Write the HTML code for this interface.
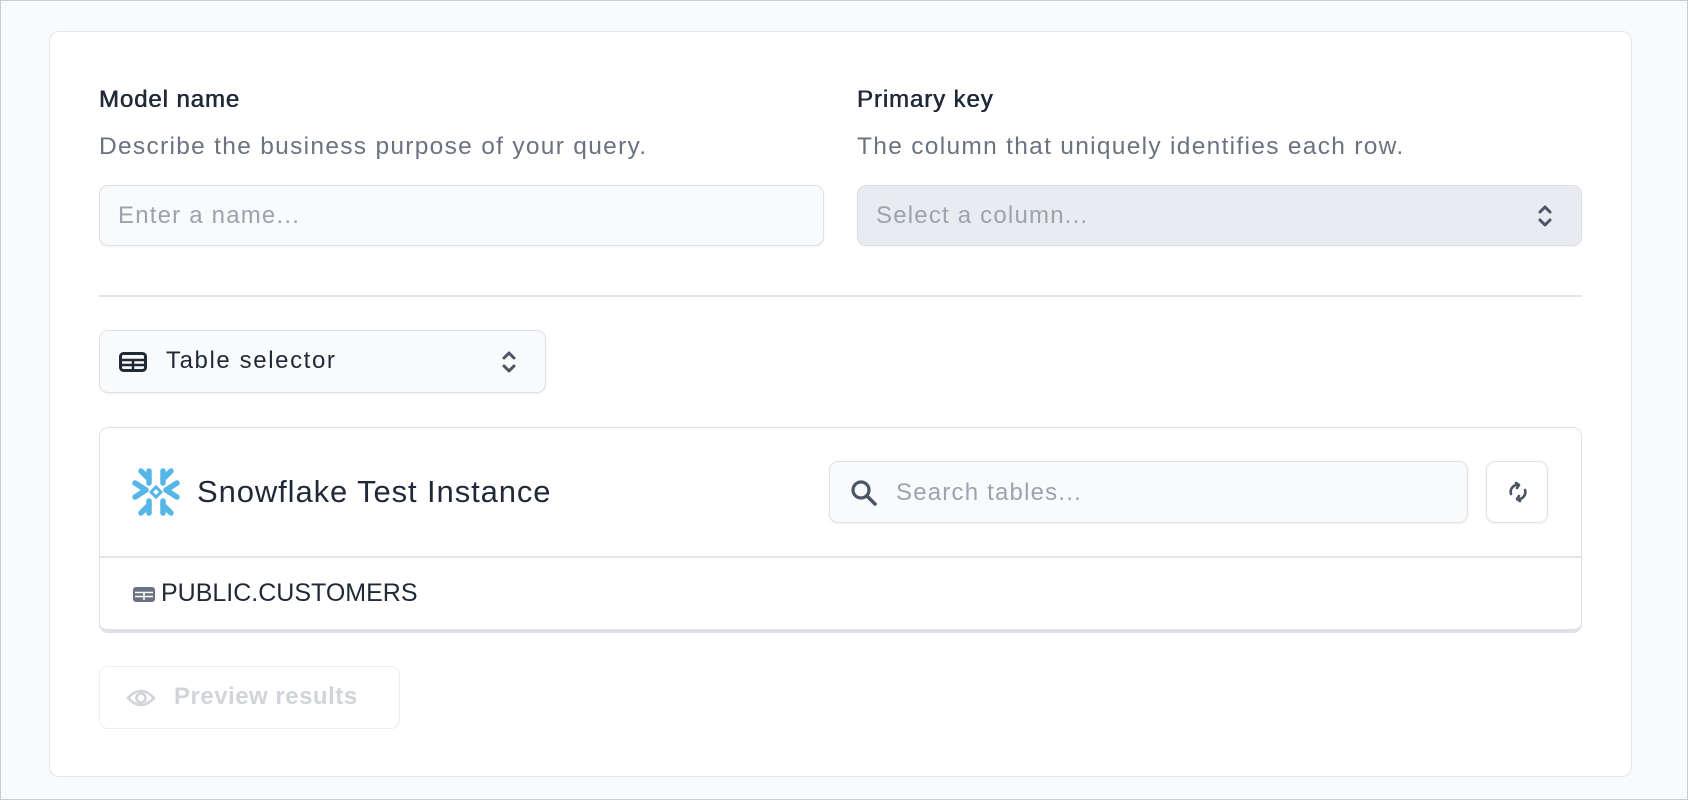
<!DOCTYPE html>
<html><head><meta charset="utf-8"><style>
*{box-sizing:border-box;margin:0;padding:0}
html,body{width:1688px;height:800px;overflow:hidden}
body{background:#f9fafb;font-family:"Liberation Sans",sans-serif;border:1px solid #c9ccd1;position:relative}
.card{position:absolute;left:48px;top:30px;width:1583px;height:746px;background:#fff;border:1.5px solid #e2e5ea;border-radius:10px}
.abs{position:absolute;white-space:nowrap}
.lbl{font-size:24px;color:#1f2937;letter-spacing:0.9px;text-shadow:0.4px 0 0 #1f2937,-0.2px 0 0 #1f2937}
.desc{font-size:24.5px;color:#6b7280;letter-spacing:1.3px}
.inp{position:absolute;border:1.5px solid #dde1e7;border-radius:9px;background:#f9fafb;box-shadow:0 1px 2px rgba(0,0,0,.05)}
.ph{position:absolute;font-size:24px;color:#9ca3af;letter-spacing:1.2px;white-space:nowrap}
</style></head><body>
<div class="card"></div>
<div class="abs lbl" style="left:98px;top:85px">Model name</div>
<div class="abs desc" style="left:98px;top:132px">Describe the business purpose of your query.</div>
<div class="inp" style="left:98px;top:184px;width:725px;height:61px"><div class="ph" style="left:18px;top:16px">Enter a name...</div></div>
<div class="abs lbl" style="left:856px;top:85px">Primary key</div>
<div class="abs desc" style="left:856px;top:132px">The column that uniquely identifies each row.</div>
<div class="inp" style="left:856px;top:184px;width:725px;height:61px;background:#e8ebef"><div class="ph" style="left:18px;top:16px">Select a column...</div>
<svg style="position:absolute;right:28px;top:17px" width="16" height="26" viewBox="0 0 16 26"><path d="M3 9 L8 4 L13 9 M3 17 L8 22 L13 17" fill="none" stroke="#4b5563" stroke-width="3" stroke-linecap="round" stroke-linejoin="round"/></svg></div>
<div class="abs" style="left:98px;top:294px;width:1483px;height:2px;background:#e2e5ea"></div>
<div class="inp" style="left:98px;top:329px;width:447px;height:63px">
<svg style="position:absolute;left:19px;top:21px" width="28" height="20" viewBox="0 0 28 20"><rect x="1.5" y="1.5" width="25" height="17" rx="3" fill="none" stroke="#1f2937" stroke-width="3"/><path d="M1.5 8 H26.5 M1.5 13 H26.5 M14 8 V18" stroke="#1f2937" stroke-width="2.5"/></svg>
<div class="abs" style="left:66px;top:16px;font-size:24px;color:#1f2937;letter-spacing:1.6px">Table selector</div>
<svg style="position:absolute;right:28px;top:18px" width="16" height="26" viewBox="0 0 16 26"><path d="M3 9 L8 4 L13 9 M3 17 L8 22 L13 17" fill="none" stroke="#4b5563" stroke-width="3" stroke-linecap="round" stroke-linejoin="round"/></svg></div>
<div class="abs" style="left:98px;top:426px;width:1483px;height:206px;border:1.5px solid #dde1e7;border-bottom:4px solid #dde1e7;border-radius:9px;background:#fff"></div>
<div class="abs" style="left:99px;top:555px;width:1481px;height:2px;background:#e2e5ea"></div>
<svg class="abs" style="left:130px;top:466px" width="50" height="50" viewBox="0 0 50 50">
<g stroke="#56b6e8" stroke-width="5.5" stroke-linecap="round" stroke-linejoin="round" fill="none">
<path d="M18 4 L18 16 M32 4 L32 16 M18 34 L18 46 M32 34 L32 46"/>
<path d="M4 13 L15 20 L4 27 M46 13 L35 20 L46 27" transform="translate(0,3)"/>
<path d="M10 4 L18 12 M40 4 L32 12 M10 46 L18 38 M40 46 L32 38"/>
</g>
<path d="M25 20 L30 25 L25 30 L20 25 Z" fill="none" stroke="#56b6e8" stroke-width="3"/>
</svg>
<div class="abs" style="left:196px;top:473px;font-size:31px;color:#1f2937;letter-spacing:0.9px">Snowflake Test Instance</div>
<div class="inp" style="left:828px;top:460px;width:639px;height:62px">
<svg style="position:absolute;left:20px;top:17px" width="28" height="28" viewBox="0 0 28 28"><circle cx="11" cy="11" r="8" fill="none" stroke="#4b5563" stroke-width="3.2"/><path d="M17 17 L25 25" stroke="#4b5563" stroke-width="3.5" stroke-linecap="round"/></svg>
<div class="ph" style="left:66px;top:17px">Search tables...</div></div>
<div class="inp" style="left:1485px;top:460px;width:62px;height:62px;background:#fff">
<svg style="position:absolute;left:19px;top:18px" width="24" height="24" viewBox="0 0 24 24"><g fill="none" stroke="#4b5563" stroke-width="2.6" stroke-linecap="round" stroke-linejoin="round"><path d="M5 14 A7 7 0 0 1 13 5 M10 3 L13 5 L11 8"/><path d="M19 10 A7 7 0 0 1 11 19 M14 21 L11 19 L13 16"/></g></svg></div>
<svg class="abs" style="left:131px;top:585px" width="24" height="17" viewBox="0 0 24 17"><rect x="1" y="1" width="22" height="15" rx="3" fill="#6b7280"/><path d="M3 6.5 H21 M3 10.5 H21 M12 6.5 V14" stroke="#fff" stroke-width="1.6"/></svg>
<div class="abs" style="left:160px;top:578px;font-size:25px;color:#1f2937">PUBLIC.CUSTOMERS</div>
<div class="abs" style="left:98px;top:665px;width:301px;height:63px;border:1.5px solid #eceef1;border-radius:9px;background:#fff">
<svg style="position:absolute;left:26px;top:21px" width="30" height="20" viewBox="0 0 30 20"><path d="M2 10 Q15 -4 28 10 Q15 24 2 10 Z" fill="none" stroke="#d1d5db" stroke-width="2.6"/><circle cx="15" cy="10" r="4.5" fill="none" stroke="#d1d5db" stroke-width="2.6"/></svg>
<div class="abs" style="left:74px;top:16px;font-size:24px;font-weight:bold;color:#d1d5db;letter-spacing:0.5px">Preview results</div></div>
</body></html>
